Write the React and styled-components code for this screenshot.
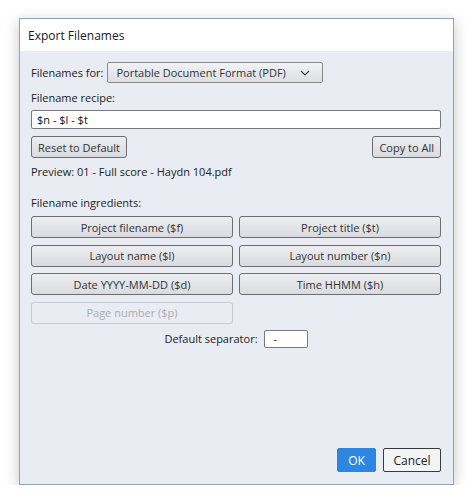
import React from 'react';
import styled, { createGlobalStyle } from 'styled-components';

const GlobalStyle = createGlobalStyle`
  html, body {
    margin: 0;
    padding: 0;
    background: #ffffff;
  }
  body {
    font-family: "Open Sans", "Noto Sans", sans-serif;
    font-size: 11px;
    color: #222;
  }
`;

const Page = styled.div`
  padding: 18px 0 0 19px;
`;

const Window = styled.div`
  width: 435px;
  height: 467px;
  box-sizing: border-box;
  border: 1px solid #79a9cf;
  background: #e9ecf2;
  box-shadow: 0 4px 14px rgba(0, 0, 0, 0.22);
  display: flex;
  flex-direction: column;
`;

const TitleBar = styled.div`
  height: 32px;
  background: #ffffff;
  display: flex;
  align-items: center;
  padding-left: 8px;
  font-size: 12px;
  color: #1a1a1a;
`;

const Body = styled.div`
  flex: 1;
  display: flex;
  flex-direction: column;
  padding: 11px 12px 12px 11px;
`;

const Row = styled.div`
  display: flex;
  align-items: center;
  gap: ${p => p.gap || 6}px;
  justify-content: ${p => p.justify || 'flex-start'};
  margin-top: ${p => p.top || 0}px;
`;

const Label = styled.div`
  line-height: 16px;
  white-space: nowrap;
  margin-top: ${p => p.top || 0}px;
`;

const Select = styled.div`
  width: 216px;
  height: 21px;
  box-sizing: border-box;
  border: 1px solid #8a8a8a;
  border-radius: 2px;
  background: linear-gradient(#f2f3f5, #dcdee2);
  display: flex;
  align-items: center;
  justify-content: space-between;
  padding: 0 12px 0 8px;
  color: #333;
  white-space: nowrap;
`;

const TextInput = styled.div`
  height: 19px;
  box-sizing: border-box;
  border: 1px solid #7a7a7a;
  border-radius: 2px;
  background: #ffffff;
  display: flex;
  align-items: center;
  padding: 0 5px;
  margin-top: 4px;
  color: #111;
`;

const Button = styled.div`
  height: 22px;
  box-sizing: border-box;
  border: 1px solid ${p => (p.disabled ? '#c6cad1' : '#6e6e6e')};
  border-radius: 3px;
  background: ${p => (p.disabled ? '#e9ecf2' : 'linear-gradient(#eceef1, #d9dbe0)')};
  color: ${p => (p.disabled ? '#a9adb5' : '#333')};
  display: flex;
  align-items: center;
  justify-content: center;
  padding: 0 6px;
  white-space: nowrap;
`;

const Grid = styled.div`
  display: grid;
  grid-template-columns: 1fr 1fr;
  grid-auto-rows: 22px;
  column-gap: 6px;
  row-gap: 6.5px;
  margin-top: 5px;
`;

const SmallInput = styled.div`
  width: 44px;
  height: 18px;
  box-sizing: border-box;
  border: 1px solid #7a7a7a;
  border-radius: 2px;
  background: #ffffff;
  padding-left: 9px;
  line-height: 15px;
`;

const Spacer = styled.div`
  flex: 1;
`;

const DialogButton = styled.div`
  height: 24px;
  box-sizing: border-box;
  min-width: ${p => p.width}px;
  border-radius: 2px;
  border: 1px solid ${p => (p.primary ? '#2b86e0' : '#3a3a3a')};
  background: ${p => (p.primary ? '#2d87e2' : '#f3f4f6')};
  color: ${p => (p.primary ? '#ffffff' : '#222')};
  display: flex;
  align-items: center;
  justify-content: center;
  font-size: 12px;
`;

const Chevron = () => (
  <svg width="10" height="6" viewBox="0 0 10 6">
    <path d="M1 1 L5 5 L9 1" fill="none" stroke="#444" strokeWidth="1.2" />
  </svg>
);

const ingredients = [
  ['Project filename ($f)', false],
  ['Project title ($t)', false],
  ['Layout name ($l)', false],
  ['Layout number ($n)', false],
  ['Date YYYY-MM-DD ($d)', false],
  ['Time HHMM ($h)', false],
  ['Page number ($p)', true],
];

export default function App() {
  return (
    <Page>
      <GlobalStyle />
      <Window>
        <TitleBar>Export Filenames</TitleBar>
        <Body>
          <Row gap={4}>
            <Label>Filenames for:</Label>
            <Select>
              <span>Portable Document Format (PDF)</span>
              <Chevron />
            </Select>
          </Row>
          <Label top={7}>Filename recipe:</Label>
          <TextInput>$n - $l - $t</TextInput>
          <Row justify="space-between" top={7}>
            <Button>Reset to Default</Button>
            <Button>Copy to All</Button>
          </Row>
          <Label top={6}>Preview: 01 - Full score - Haydn 104.pdf</Label>
          <Label top={15}>Filename ingredients:</Label>
          <Grid>
            {ingredients.map(([text, disabled]) => (
              <Button key={text} disabled={disabled}>{text}</Button>
            ))}
          </Grid>
          <Row justify="center" top={6}>
            <Label>Default separator:</Label>
            <SmallInput>-</SmallInput>
          </Row>
          <Spacer />
          <Row justify="flex-end" gap={7}>
            <DialogButton primary width={39}>OK</DialogButton>
            <DialogButton width={58}>Cancel</DialogButton>
          </Row>
        </Body>
      </Window>
    </Page>
  );
}
